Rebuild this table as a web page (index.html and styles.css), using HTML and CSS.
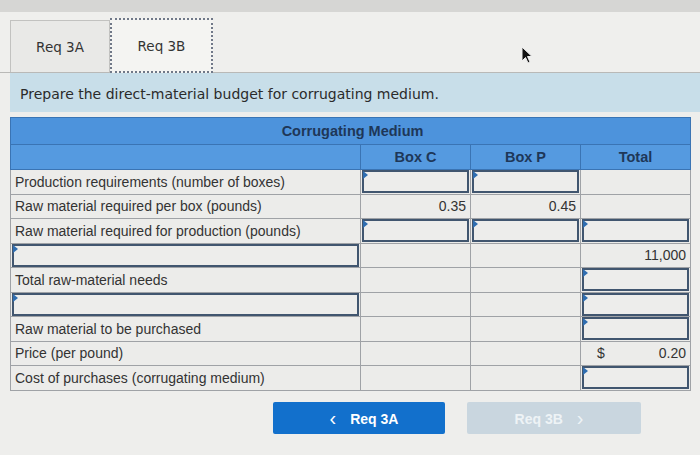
FILE: index.html
```html
<!DOCTYPE html>
<html>
<head>
<meta charset="utf-8">
<link rel="stylesheet" href="styles.css">
</head>
<body>
<div class="topbar"></div>
<div class="tabstrip">
  <div class="tab">Req 3A</div>
  <div class="tab tab-active">Req 3B</div>
</div>
<div class="instruction">Prepare the direct-material budget for corrugating medium.</div>
<div class="content">
<table class="budget">
  <colgroup>
    <col class="c-label"><col class="c-num"><col class="c-num"><col class="c-num">
  </colgroup>
  <thead>
    <tr class="h1"><th colspan="4">Corrugating Medium</th></tr>
    <tr class="h2"><th></th><th>Box C</th><th>Box P</th><th>Total</th></tr>
  </thead>
  <tbody>
    <tr><td>Production requirements (number of boxes)</td><td><div class="inp"></div></td><td><div class="inp"></div></td><td></td></tr>
    <tr><td>Raw material required per box (pounds)</td><td class="num">0.35</td><td class="num">0.45</td><td></td></tr>
    <tr><td>Raw material required for production (pounds)</td><td><div class="inp"></div></td><td><div class="inp"></div></td><td><div class="inp"></div></td></tr>
    <tr><td><div class="inp"></div></td><td></td><td></td><td class="num">11,000</td></tr>
    <tr><td>Total raw-material needs</td><td></td><td></td><td><div class="inp"></div></td></tr>
    <tr><td><div class="inp"></div></td><td></td><td></td><td><div class="inp"></div></td></tr>
    <tr><td>Raw material to be purchased</td><td></td><td></td><td><div class="inp"></div></td></tr>
    <tr><td>Price (per pound)</td><td></td><td></td><td class="num"><div class="money"><span>$</span><span>0.20</span></div></td></tr>
    <tr><td>Cost of purchases (corrugating medium)</td><td></td><td></td><td><div class="inp"></div></td></tr>
  </tbody>
</table>
<div class="nav">
  <button class="btn btn-prev"><span class="chev">&lsaquo;</span> Req 3A</button>
  <button class="btn btn-next">Req 3B <span class="chev">&rsaquo;</span></button>
</div>
</div>
<svg class="cursor" width="14" height="20" viewBox="0 0 14 20"><path d="M1 1 L1 15 L4.5 11.5 L7 17 L9 16 L6.5 10.5 L11 10.5 Z" fill="#111" stroke="#eee" stroke-width="1"/></svg>
</body>
</html>
```
FILE: styles.css
```css
html, body {
  margin: 0;
  padding: 0;
}
body {
  width: 700px;
  height: 455px;
  background: #eeeeec;
  font-family: "DejaVu Sans", Verdana, sans-serif;
  position: relative;
  overflow: hidden;
}
.topbar {
  height: 12px;
  background: #d6d6d4;
}
.tabstrip {
  display: flex;
  align-items: flex-end;
  height: 60px;
  padding-left: 10px;
  border-bottom: 1px solid #b9b9b7;
  background: #efefed;
}
.tab {
  width: 100px;
  height: 52px;
  box-sizing: border-box;
  display: flex;
  align-items: center;
  justify-content: center;
  font-size: 13.5px;
  color: #333;
  background: #e9e9e7;
  border: 1px solid #c2c2c0;
  border-bottom: none;
}
.tab-active {
  width: 103px;
  height: 55px;
  background: #f4f4f2;
  border: 2px dotted #707888;
  margin-bottom: -1px;
}
.instruction {
  margin-left: 10px;
  height: 39px;
  background: #c8dee9;
  color: #2b2b2b;
  font-size: 14px;
  line-height: 42px;
  padding-left: 10px;
}
.content {
  padding: 5px 10px 0 10px;
}
.budget {
  border-collapse: collapse;
  width: 680px;
  table-layout: fixed;
  font-family: "Liberation Sans", Arial, sans-serif;
  font-size: 14px;
  color: #333;
}
.c-label { width: 350px; }
.c-num { width: 110px; }
.budget th {
  background: #4d93dc;
  color: #1e3758;
  font-weight: bold;
  font-size: 14.5px;
  border: 1px solid #3a74b4;
  padding: 0;
}
.h1 th {
  height: 26px;
  text-align: center;
  padding-left: 4px;
}
.h2 th {
  height: 24px;
  background: #559ae0;
}
.budget td {
  height: 23.5px;
  padding: 0 4px;
  border: 1px solid #9fa2a6;
  background: #ececea;
  white-space: nowrap;
  overflow: hidden;
}
.budget td:has(.inp) {
  padding: 0 1px;
}
.budget td.num {
  text-align: right;
}
.inp {
  position: relative;
  height: 19px;
  border: 2px solid #41566f;
  background: #ededeb;
}
.inp::before {
  content: "";
  position: absolute;
  left: -1px;
  top: -1px;
  border-top: 4px solid transparent;
  border-bottom: 4px solid transparent;
  border-left: 5px solid #2f6db0;
}
.money {
  display: flex;
  justify-content: space-between;
  padding-left: 12px;
}
.nav {
  display: flex;
  gap: 22px;
  margin-top: 11px;
  padding-left: 263px;
}
.btn {
  width: 172px;
  height: 32px;
  border: none;
  border-radius: 2px;
  font-family: "Liberation Sans", Arial, sans-serif;
  font-weight: bold;
  font-size: 14px;
  color: #fff;
}
.btn-prev {
  background: #1270cc;
}
.btn-next {
  width: 174px;
  background: #c9d6df;
  color: #eef3f6;
}
.chev {
  font-size: 20px;
  font-weight: normal;
  margin: 0 10px;
  position: relative;
  top: 1px;
}
.cursor {
  position: absolute;
  left: 521px;
  top: 46px;
}
```
